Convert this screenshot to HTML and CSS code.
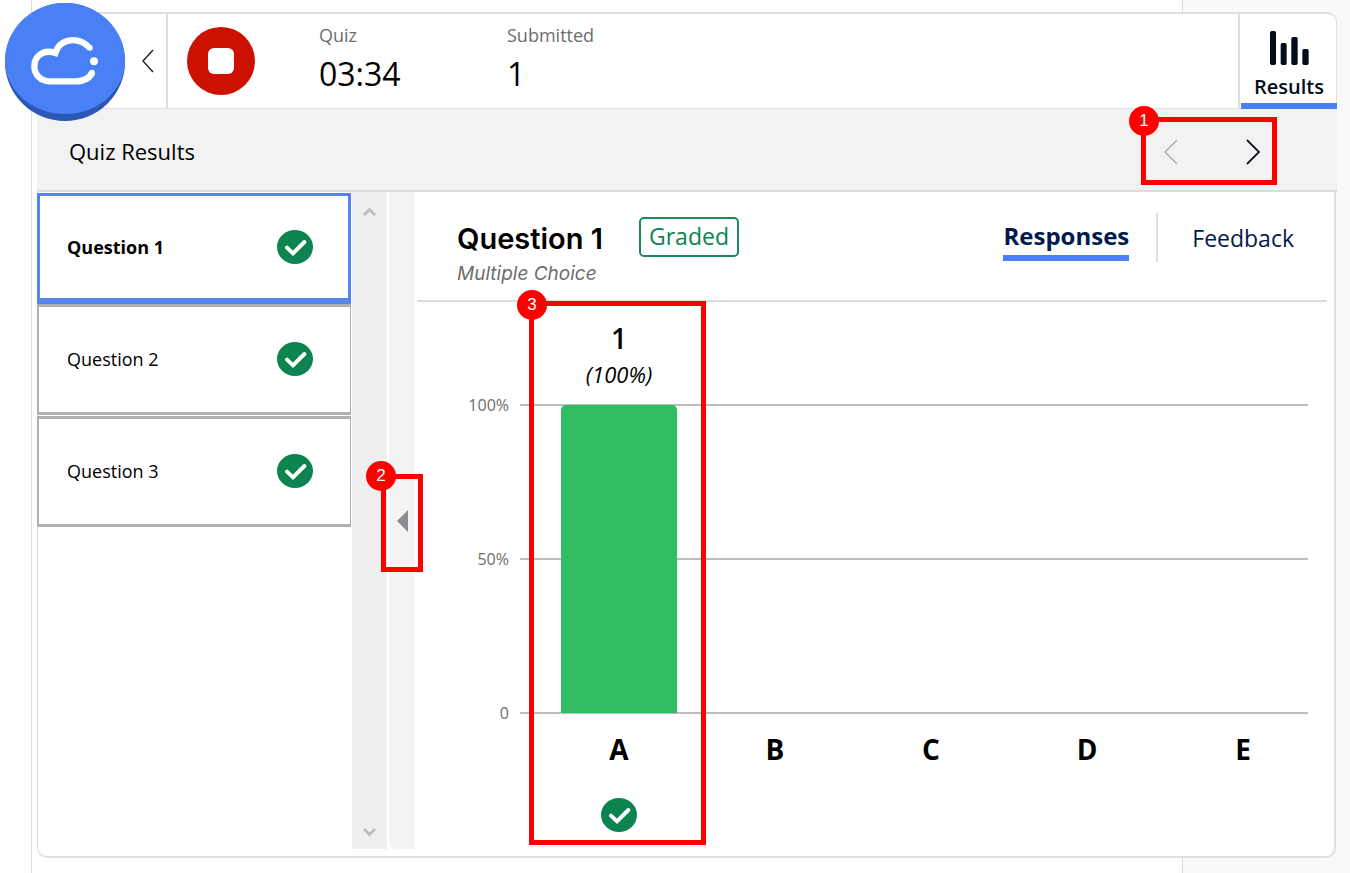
FILE: index.html
```html
<!DOCTYPE html>
<html lang="en">
<head>
<meta charset="utf-8">
<title>Quiz Results</title>
<link rel="stylesheet" href="styles.css">
</head>
<body>
<svg class="defs" aria-hidden="true">
  <symbol id="check" viewBox="0 0 108 102">
    <ellipse cx="54" cy="51" rx="54" ry="51" fill="#0b844f"/>
    <path d="M30 53 L48 70 L82 36" fill="none" stroke="#fff" stroke-width="12" stroke-linecap="round"/>
  </symbol>
</svg>
<div class="page">
  <div class="backdrop"></div>
  <div class="panel">
    <header class="topbar">
      <div class="brand">
        <svg class="logo" viewBox="15 9 360 354" role="img" aria-label="Cloud logo">
          <ellipse cx="195" cy="186" rx="180" ry="177" fill="#2b58b5"/>
          <path d="M15 182 A180 173 0 0 1 375 182 A180 160 0 0 1 15 182Z" fill="#4a80f5"/>
          <path d="M271 145 C236 109 182 112 166 159 C128 146 103 171 103 199 C103 225 123 244 149 244 H224 C248 244 268 237 277 217" fill="none" stroke="#fff" stroke-width="19"/>
          <circle cx="270" cy="144" r="8" fill="#fff"/>
          <circle cx="276" cy="218" r="9" fill="#fff"/>
          <circle cx="282" cy="184" r="12" fill="#fff"/>
        </svg>
        <button class="icon-button" aria-label="Collapse toolbar">
          <svg width="12" height="24" viewBox="0 0 12 24"><path d="M11 1 L1 12 L11 23" fill="none" stroke="#222a35" stroke-width="1.5"/></svg>
        </button>
      </div>
      <button class="stop" aria-label="Stop quiz"><span class="stop-mark"></span></button>
      <dl class="stats">
        <div class="stat"><dt>Quiz</dt><dd>03:34</dd></div>
        <div class="stat"><dt>Submitted</dt><dd>1</dd></div>
      </dl>
      <button class="results-tab">
        <svg class="bars" viewBox="0 0 117 102" fill="#000d1a">
          <rect width="18" height="102" rx="5"/><rect x="32" y="36" width="18" height="66" rx="5"/>
          <rect x="64" y="18" width="19" height="84" rx="5"/><rect x="97" y="54" width="19" height="48" rx="5"/>
        </svg>
        <span>Results</span>
      </button>
    </header>
    <div class="subbar">
      <h1>Quiz Results</h1>
      <nav class="pager" aria-label="Questions">
        <button class="icon-button" aria-label="Previous question" disabled>
          <svg width="15" height="26" viewBox="0 0 15 26"><path d="M14 1 L2 13 L14 25" fill="none" stroke="#b3b5ba" stroke-width="1.7"/></svg>
        </button>
        <button class="icon-button" aria-label="Next question">
          <svg width="15" height="26" viewBox="0 0 15 26"><path d="M1 1 L13 13 L1 25" fill="none" stroke="#0b1522" stroke-width="1.8"/></svg>
        </button>
        <div class="callout"><span class="badge">1</span></div>
      </nav>
    </div>
    <main class="content">
      <div class="questions">
        <button class="question selected">Question 1<svg class="check"><use href="#check"/></svg></button>
        <button class="question">Question 2<svg class="check"><use href="#check"/></svg></button>
        <button class="question">Question 3<svg class="check"><use href="#check"/></svg></button>
      </div>
      <div class="scrollbar">
        <button class="icon-button" aria-label="Scroll up"><svg width="13" height="10" viewBox="0 0 13 10"><path d="M1 8 L6.500 2.500 L12 8" fill="none" stroke="#bdbdbd" stroke-width="3"/></svg></button>
        <button class="icon-button" aria-label="Scroll down"><svg width="13" height="10" viewBox="0 0 13 10"><path d="M1 2 L6.500 7.500 L12 2" fill="none" stroke="#bdbdbd" stroke-width="3"/></svg></button>
      </div>
      <div class="divider">
        <button class="icon-button" aria-label="Hide question list"><svg width="11" height="22" viewBox="0 0 11 22"><path d="M11 0 V22 L0 11Z" fill="#8b8d92"/></svg></button>
        <div class="callout side"><span class="badge">2</span></div>
      </div>
      <section class="detail">
        <div class="detail-head">
          <div class="title">
            <h2>Question 1</h2>
            <p>Multiple Choice</p>
          </div>
          <span class="tag">Graded</span>
          <div class="tabs">
            <button class="tab active">Responses</button>
            <button class="tab">Feedback</button>
          </div>
        </div>
        <div class="chart">
          <div class="axis">
            <div class="tick"><span>100%</span></div>
            <div class="tick"><span>50%</span></div>
            <div class="tick"><span>0</span></div>
          </div>
          <div class="columns">
            <div class="column">
              <div class="value"><strong>1</strong><em>(100%)</em></div>
              <div class="plot"><div class="bar" style="height:100%"></div></div>
              <div class="letter">A</div>
              <svg class="check"><use href="#check"/></svg>
              <div class="callout answer"><span class="badge">3</span></div>
            </div>
            <div class="column"><div class="value"></div><div class="plot"></div><div class="letter">B</div></div>
            <div class="column"><div class="value"></div><div class="plot"></div><div class="letter">C</div></div>
            <div class="column"><div class="value"></div><div class="plot"></div><div class="letter">D</div></div>
            <div class="column"><div class="value"></div><div class="plot"></div><div class="letter">E</div></div>
          </div>
        </div>
      </section>
    </main>
  </div>
</div>
</body>
</html>
```
FILE: styles.css
```css
* { box-sizing: border-box; }

body {
  margin: 0;
  background: #fff;
  color: #000;
  font-family: "Open Sans", "Noto Sans", sans-serif;
}

h1, h2, p, dl, dd { margin: 0; }

button {
  border: 0;
  padding: 0;
  background: none;
  color: inherit;
  font: inherit;
}

svg { display: block; flex: none; }
.defs { position: absolute; width: 0; height: 0; }
.icon-button { display: flex; align-items: center; justify-content: center; }

.page { display: grid; min-height: 100vh; }
.backdrop, .panel { grid-area: 1 / 1; }

.backdrop {
  margin-left: 31px;
  border-left: 1px solid #dcdcdf;
  background: linear-gradient(#dcdcdf, #dcdcdf) right 167px top / 1px 100% no-repeat,
    linear-gradient(#f9f9f9, #f9f9f9) right top / 167px 100% no-repeat;
}

.panel {
  display: flex;
  flex-direction: column;
  margin: 12px 13px 15px 37px;
  z-index: 1;
}

/* Top bar */
.topbar {
  display: flex;
  height: 97px;
  background: #fff;
  border: solid #dedfe4;
  border-width: 2px 1px 1px 0;
  border-top-right-radius: 10px;
}

.brand {
  position: relative;
  display: flex;
  justify-content: flex-end;
  width: 131px;
  padding-right: 12px;
  border-right: 2px solid #dcdcdf;
}

.logo {
  position: absolute;
  left: -32px;
  top: -11px;
  width: 120px;
  height: 118px;
  z-index: 2;
}

.stop {
  display: grid;
  place-items: center;
  align-self: center;
  width: 68px;
  height: 68px;
  margin-left: 19px;
  border-radius: 50%;
  background: #cc1100;
}

.stop-mark { width: 26px; height: 26px; border-radius: 6px; background: #fff; }

.stats {
  display: flex;
  flex: 1;
  margin-left: 64px;
  padding-top: 8px;
  border-right: 2px solid #dcdcdf;
}

.stat { width: 188px; }
.stat dt { color: #6d6d6d; font-size: 18px; line-height: 26px; }
.stat dd { font-size: 32px; line-height: 51px; }

.results-tab {
  display: flex;
  flex-direction: column;
  align-items: center;
  width: 96px;
  margin: 0 -1px -1px 1px;
  padding-top: 17px;
  border-bottom: 6px solid #4a80f5;
  color: #000d1a;
  font-size: 20px;
  font-weight: 600;
}

.bars { width: 39px; height: 34px; }
.results-tab span { line-height: 44px; }

/* Sub bar */
.subbar {
  display: flex;
  align-items: flex-start;
  justify-content: space-between;
  height: 83px;
  padding: 8px 60px 0 32px;
  background: #f2f2f2;
  border-bottom: 2px solid #dcdcdc;
}

h1 { font-size: 22px; font-weight: 400; line-height: 68px; }

.pager {
  position: relative;
  display: flex;
  align-items: center;
  justify-content: space-between;
  width: 136px;
  height: 68px;
  padding: 2px 16px 0 22px;
}

/* Red call-outs drawn over the interface */
.callout { position: absolute; inset: 0; border: 5px solid #f00; pointer-events: none; z-index: 3; }
.callout.side { inset: 282px -8px auto; height: 98px; }
.callout.answer { inset: -1px -9px auto -12px; height: 544px; }

.badge {
  position: absolute;
  left: -17px;
  top: -16px;
  display: grid;
  place-items: center;
  width: 30px;
  height: 30px;
  border-radius: 50%;
  background: #f00;
  color: #fff;
  font-family: "Liberation Sans", Arial, sans-serif;
  font-size: 17px;
}

.side .badge { left: -20px; top: -18px; }

/* Content */
.content {
  display: flex;
  flex: 1;
  margin-right: 1px;
  padding-bottom: 7px;
  background: #fff;
  border: solid #dedfe4;
  border-width: 0 2px 2px 1px;
  border-radius: 0 0 10px 10px;
}

.questions {
  display: flex;
  flex-direction: column;
  gap: 1px;
  width: 314px;
  margin-left: -1px;
  padding-top: 1px;
}

.question {
  display: flex;
  align-items: center;
  justify-content: space-between;
  height: 111px;
  padding: 0 37px 1px 28px;
  border: solid #b0b0b0;
  border-width: 3px 1px 3px 2px;
  background: #fff;
  font-size: 18px;
  text-align: left;
}

.question.selected {
  margin-bottom: -1px;
  padding: 0 35px 0 27px;
  border: 3px solid #5584ee;
  border-bottom-width: 6px;
  font-weight: 700;
}

.check { width: 36px; height: 34px; }

.scrollbar {
  display: flex;
  flex-direction: column;
  align-items: center;
  justify-content: space-between;
  width: 35px;
  margin: 0 2px 0 1px;
  padding: 15px 0 12px;
  background: #efefef;
}

.divider {
  position: relative;
  display: flex;
  align-items: center;
  justify-content: center;
  width: 26px;
  border-bottom-left-radius: 8px;
  background: #f3f3f3;
}

.detail { flex: 1; min-width: 0; }

.detail-head {
  display: flex;
  align-items: flex-start;
  height: 110px;
  margin: 0 7px 0 2px;
  padding: 21px 33px 0 40px;
  border-bottom: 2px solid #dcdcdc;
}

.title { width: 182px; padding-top: 8px; font-family: Inter, sans-serif; }
.title h2 { font-size: 29px; font-weight: 600; line-height: 36px; white-space: nowrap; }
.title p { color: #6d6d6d; font-size: 19px; font-style: italic; line-height: 34px; }

.tag {
  height: 40px;
  margin-top: 4px;
  padding: 0 8px;
  border: 2px solid #1c8a5a;
  border-radius: 5px;
  color: #0b844f;
  font-size: 23px;
  line-height: 35px;
}

.tabs { display: flex; align-items: flex-start; margin-left: auto; color: #001a4d; font-size: 23px; }
.tab { height: 48px; line-height: 44px; }
.tab.active { border-bottom: 6px solid #4a80f5; font-size: 24px; font-weight: 700; line-height: 46px; }
.tab + .tab { height: 49px; margin-left: 27px; padding-left: 34px; border-left: 2px solid #dcdcdc; }

/* Chart */
.chart { display: grid; }
.axis, .columns { grid-area: 1 / 1; }

.axis {
  display: flex;
  flex-direction: column;
  gap: 130px;
  margin: 91px 26px 0 20px;
}

.tick {
  display: grid;
  grid-template-columns: 74px 1fr;
  align-items: center;
  gap: 11px;
  height: 24px;
  color: #6d6d6d;
  font-size: 16px;
  text-align: right;
}

.tick::after { content: ""; height: 2px; background: #bdbdbd; }

.columns {
  display: grid;
  grid-template-columns: repeat(5, 1fr);
  margin: 0 13px 0 126px;
}

.column { position: relative; display: flex; flex-direction: column; align-items: center; }
.value { display: flex; flex-direction: column; align-items: center; height: 103px; padding-top: 18px; }
.value strong { font-size: 28px; font-weight: 600; line-height: 36px; }
.value em { font-size: 22px; line-height: 36px; }
.plot { display: flex; align-items: flex-end; width: calc(100% - 40px); height: 308px; }
.bar { width: 100%; border-radius: 5px 5px 0 0; background: #30bc61; }
.letter { font-size: 28px; font-weight: 700; line-height: 72px; margin-bottom: 13px; }
```
